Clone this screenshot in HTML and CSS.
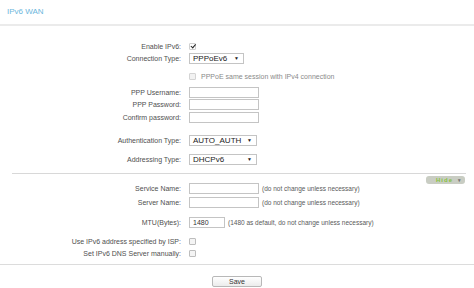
FILE: index.html
```html
<!DOCTYPE html>
<html>
<head>
<meta charset="utf-8">
<link rel="stylesheet" href="styles.css">
</head>
<body>
<div class="header"><span class="title">IPv6 WAN</span></div>
<div class="form">
  <div class="row r-enable"><span class="label">Enable IPv6:</span><span class="cb checked"></span></div>
  <div class="row r-conn"><span class="label">Connection Type:</span><span class="select s-conn">PPPoEv6<i class="arr">▼</i></span></div>
  <div class="row r-same"><span class="label"></span><span class="cb disabled"></span><span class="cbtext">PPPoE same session with IPv4 connection</span></div>
  <div class="row r-user"><span class="label">PPP Username:</span><span class="input"></span></div>
  <div class="row"><span class="label">PPP Password:</span><span class="input"></span></div>
  <div class="row r-confirm"><span class="label">Confirm password:</span><span class="input"></span></div>
  <div class="row r-auth"><span class="label">Authentication Type:</span><span class="select s-wide">AUTO_AUTH<i class="arr">▼</i></span></div>
  <div class="row r-addr"><span class="label">Addressing Type:</span><span class="select s-wide">DHCPv6<i class="arr">▼</i></span></div>
  <div class="sep"><span class="hide">Hide<i class="harr">▾</i></span></div>
  <div class="row r-svc"><span class="label">Service Name:</span><span class="input"></span><span class="note">(do not change unless necessary)</span></div>
  <div class="row r-srv"><span class="label">Server Name:</span><span class="input"></span><span class="note">(do not change unless necessary)</span></div>
  <div class="row r-mtu"><span class="label">MTU(Bytes):</span><span class="input small">1480</span><span class="note">(1480 as default, do not change unless necessary)</span></div>
  <div class="row r-isp"><span class="label">Use IPv6 address specified by ISP:</span><span class="cb"></span></div>
  <div class="row"><span class="label">Set IPv6 DNS Server manually:</span><span class="cb"></span></div>
</div>
<div class="footer"><span class="btn">Save</span></div>
</body>
</html>
```
FILE: styles.css
```css
html, body {
  margin: 0;
  padding: 0;
  background: #fff;
  font-family: "Liberation Sans", Arial, sans-serif;
  width: 474px;
  height: 288px;
  overflow: hidden;
}
.header {
  height: 24px;
  border-bottom: 2px solid #ebebeb;
  box-sizing: content-box;
  padding-left: 7px;
}
.title {
  display: block;
  padding-top: 7px;
  font-size: 8px;
  color: #6cb6dc;
  line-height: 9px;
}
.form {
  display: flex;
  flex-direction: column;
  padding-top: 14px;
  position: relative;
}
.row {
  display: flex;
  align-items: center;
  height: 12px;
  font-size: 7px;
  color: #4f4f4f;
}
.label {
  width: 181px;
  padding-right: 8px;
  text-align: right;
  flex: none;
  box-sizing: content-box;
}
.r-same { margin-top: 6px; }
.r-user { margin-top: 4px; }
.r-confirm { margin-top: 1px; }
.r-auth { margin-top: 11px; }
.r-addr { margin-top: 7px; }
.r-svc { margin-top: 8px; }
.r-srv { margin-top: 2px; }
.r-mtu { margin-top: 8px; }
.r-isp { margin-top: 7px; }
.cb {
  width: 5px;
  height: 5px;
  border: 1px solid #bdbdbd;
  background: #f4f4f4;
  border-radius: 1px;
  position: relative;
  flex: none;
}
.cb.checked {
  background: #fff;
  border-color: #d0d0d0;
}
.cb.checked::after {
  content: "";
  position: absolute;
  left: 1.5px;
  top: -0.5px;
  width: 1.5px;
  height: 3.5px;
  border: solid #222;
  border-width: 0 1.5px 1.5px 0;
  transform: rotate(40deg);
}
.cb.disabled {
  border-color: #d4d4d4;
  background: #f2f2f2;
}
.cbtext {
  margin-left: 5px;
  color: #8a8a8a;
}
.select {
  position: relative;
  height: 11px;
  border: 1px solid #c4c4c4;
  box-sizing: border-box;
  font-size: 8px;
  line-height: 9px;
  padding-left: 3px;
  color: #222;
  background: #fff;
}
.s-conn { width: 55px; }
.s-wide { width: 68px; }
.arr {
  position: absolute;
  right: 4px;
  top: 2px;
  font-style: normal;
  font-size: 5px;
  line-height: 5px;
  color: #222;
}
.input {
  width: 70px;
  height: 11px;
  border: 1px solid #c4c4c4;
  box-sizing: border-box;
  background: #fff;
  font-size: 7px;
  line-height: 9px;
  padding-left: 3px;
  color: #333;
}
.input.small { width: 36px; }
.note {
  margin-left: 3px;
  color: #5a5a5a;
  font-size: 6.5px;
}
.sep {
  margin: 8px 8px 0 12px;
  border-top: 1px solid #d8d8d8;
  height: 0;
  position: relative;
}
.hide {
  position: absolute;
  right: 1px;
  top: 2px;
  width: 39px;
  height: 8px;
  background: #c9cdc3;
  border-radius: 3px;
  font-size: 6px;
  line-height: 8px;
  color: #86c23e;
  letter-spacing: 1px;
  font-weight: bold;
  box-sizing: border-box;
  padding-left: 10px;
}
.harr {
  font-style: normal;
  color: #777;
  margin-left: 5px;
  font-size: 5px;
  letter-spacing: 0;
}
.footer {
  margin-top: 5px;
  border-top: 1px solid #dcdcdc;
  display: flex;
  justify-content: flex-start;
  padding-left: 212px;
  padding-top: 11px;
}
.btn {
  width: 50px;
  height: 11px;
  box-sizing: border-box;
  border: 1px solid #b8b8b8;
  border-radius: 2px;
  background: linear-gradient(#ffffff, #ececec);
  font-size: 7px;
  line-height: 9px;
  text-align: center;
  color: #333;
}
```
